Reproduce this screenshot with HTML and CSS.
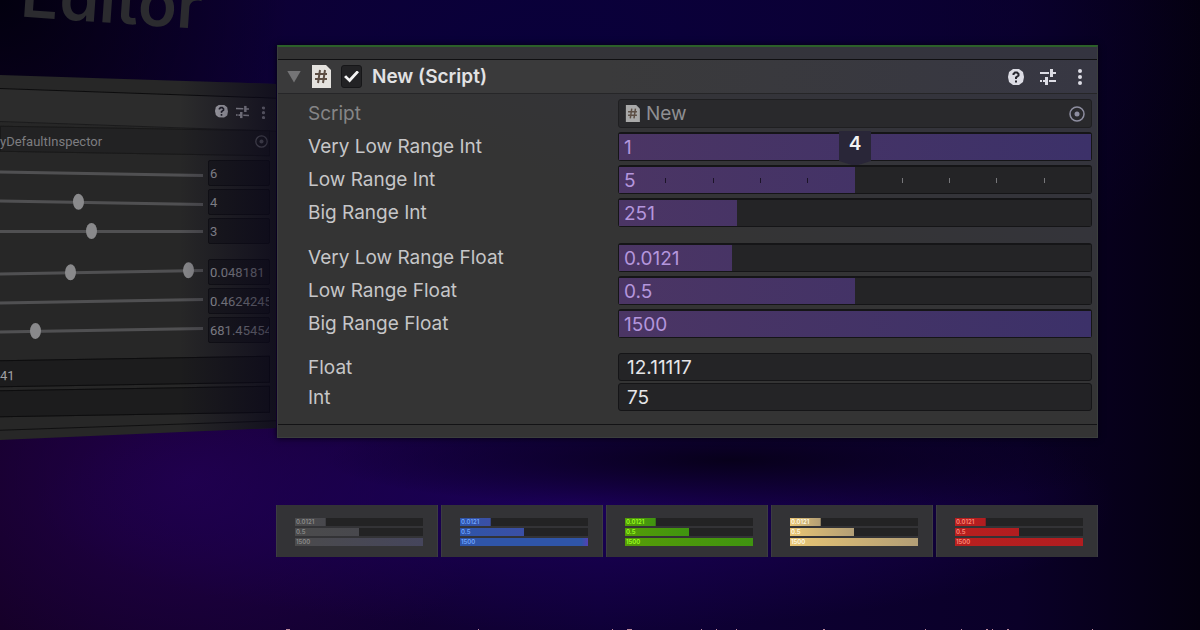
FILE: index.html
```
<!DOCTYPE html>
<html lang="en">
<head>
    <meta charset="UTF-8">
    <meta name="viewport" content="width=device-width, initial-scale=1.0">
    <title>Editor Inspector</title>
    <link rel="stylesheet" href="styles.css">
</head>
<body>
    <!-- shared icons -->
    <svg class="sprite" aria-hidden="true">
        <symbol id="help" viewBox="0 0 16 16">
            <path fill="currentColor" d="M5 0h6l4 3 1 5-1 5-4 3H5l-4-3-1-5 1-5z"/>
            <path fill="none" stroke="#26262e" stroke-width="2" d="M5.500 6V5L7 3.500h2L10.500 5v1.500L8 8.500V10"/>
            <path fill="#26262e" d="M7 11.500h2v2H7z"/>
        </symbol>
        <symbol id="preset" viewBox="0 0 16 16">
            <path fill="currentColor" d="M0 3h9v2H0zM13 3h3v2h-3zM10 0h3v8h-3zM0 11h2v2H0zM3 11h2v2H3zM9 11h7v2H9zM5 8h3v8H5z"/>
        </symbol>
        <symbol id="more" viewBox="0 0 16 16">
            <circle cx="8" cy="2" r="2" fill="currentColor"/>
            <circle cx="8" cy="8" r="2" fill="currentColor"/>
            <circle cx="8" cy="14" r="2" fill="currentColor"/>
        </symbol>
        <symbol id="target" viewBox="0 0 16 16">
            <circle cx="8" cy="8" r="7" fill="none" stroke="currentColor" stroke-width="1.500"/>
            <circle cx="8" cy="8" r="2.500" fill="currentColor"/>
        </symbol>
        <symbol id="script" viewBox="0 0 20 23">
            <path fill="currentColor" d="M1 0h14l5 5v18H1z"/>
            <path fill="none" stroke="#5d4f45" stroke-width="2" d="M9 5L7 18M14 5l-2 13M4 9h12M4 14h12"/>
        </symbol>
    </svg>

    <div id="app">
        <aside class="default-side">
            <h1>Editor</h1>
            <section class="default-panel" aria-label="Default inspector">
                <div class="default-header">
                    <button aria-label="Help"><svg><use href="#help"/></svg></button>
                    <button aria-label="Presets"><svg><use href="#preset"/></svg></button>
                    <button aria-label="More"><svg><use href="#more"/></svg></button>
                </div>
                <div class="default-script">
                    <span>yDefaultInspector</span>
                    <button aria-label="Pick script"><svg><use href="#target"/></svg></button>
                </div>
                <div class="default-rows">
                    <div class="default-row tilt-down">
                        <div class="track"><input type="range" value="0" aria-label="Very low int"></div>
                        <input type="text" value="6" aria-label="Very low int value">
                    </div>
                    <div class="default-row tilt-down">
                        <div class="track"><input type="range" value="45" aria-label="Low int"></div>
                        <input type="text" value="4" aria-label="Low int value">
                    </div>
                    <div class="default-row">
                        <div class="track"><input type="range" value="51" aria-label="Big int"></div>
                        <input type="text" value="3" aria-label="Big int value">
                    </div>
                </div>
                <div class="default-rows">
                    <div class="default-row tilt-up">
                        <div class="track">
                            <input type="range" value="41" aria-label="Very low float minimum">
                            <input type="range" value="96" aria-label="Very low float maximum">
                        </div>
                        <input type="text" value="0.048181" aria-label="Very low float value">
                    </div>
                    <div class="default-row tilt-up">
                        <div class="track"><input type="range" value="0" aria-label="Low float"></div>
                        <input type="text" value="0.4624245" aria-label="Low float value">
                    </div>
                    <div class="default-row tilt-up">
                        <div class="track"><input type="range" value="25" aria-label="Big float"></div>
                        <input type="text" value="681.45454" aria-label="Big float value">
                    </div>
                </div>
                <div class="default-strip"><span>41</span></div>
                <div class="default-strip"></div>
                <div class="default-end"></div>
            </section>
        </aside>

        <main>
            <section class="inspector">
                <div class="inspector-top"></div>
                <header>
                    <button class="foldout" aria-label="Collapse"></button>
                    <svg class="script-icon"><use href="#script"/></svg>
                    <input type="checkbox" id="enabled" checked>
                    <label for="enabled">New (Script)</label>
                    <nav>
                        <button aria-label="Help"><svg><use href="#help"/></svg></button>
                        <button aria-label="Presets"><svg><use href="#preset"/></svg></button>
                        <button aria-label="More"><svg><use href="#more"/></svg></button>
                    </nav>
                </header>

                <div class="fields">
                    <div class="row">
                        <span class="muted">Script</span>
                        <div class="object-field">
                            <svg><use href="#script"/></svg>
                            <span>New</span>
                            <button aria-label="Pick script"><svg><use href="#target"/></svg></button>
                        </div>
                    </div>
                    <div class="row">
                        <label for="vlInt">Very Low Range Int</label>
                        <div class="slider">
                            <input type="range" id="vlInt" min="0" max="1" value="1" style="--fill: 100%">
                            <output for="vlInt">1</output>
                            <span class="tooltip">4</span>
                        </div>
                    </div>
                    <div class="row">
                        <label for="lInt">Low Range Int</label>
                        <div class="slider">
                            <input type="range" id="lInt" min="0" max="10" value="5" style="--fill: 50%">
                            <output for="lInt">5</output>
                            <div class="ticks"><i></i><i></i><i></i><i></i><i></i><i></i><i></i><i></i><i></i></div>
                        </div>
                    </div>
                    <div class="row">
                        <label for="bInt">Big Range Int</label>
                        <div class="slider">
                            <input type="range" id="bInt" min="0" max="1000" value="251" style="--fill: 25%">
                            <output for="bInt">251</output>
                        </div>
                    </div>
                </div>

                <div class="fields">
                    <div class="row">
                        <label for="vlFloat">Very Low Range Float</label>
                        <div class="slider">
                            <input type="range" id="vlFloat" min="0" max="0.05" step="0.0001" value="0.0121" style="--fill: 24%">
                            <output for="vlFloat">0.0121</output>
                        </div>
                    </div>
                    <div class="row">
                        <label for="lFloat">Low Range Float</label>
                        <div class="slider">
                            <input type="range" id="lFloat" min="0" max="1" step="0.1" value="0.5" style="--fill: 50%">
                            <output for="lFloat">0.5</output>
                        </div>
                    </div>
                    <div class="row">
                        <label for="bFloat">Big Range Float</label>
                        <div class="slider">
                            <input type="range" id="bFloat" min="0" max="1500" value="1500" style="--fill: 100%">
                            <output for="bFloat">1500</output>
                        </div>
                    </div>
                </div>

                <div class="fields plain">
                    <div class="row">
                        <label for="float">Float</label>
                        <input type="text" id="float" value="12.11117">
                    </div>
                    <div class="row">
                        <label for="int">Int</label>
                        <input type="text" id="int" value="75">
                    </div>
                </div>
                <div class="inspector-end"></div>
            </section>

            <div class="themes">
                <button class="theme gray" aria-label="Gray theme">
                    <span class="bar low">0.0121</span><span class="bar half">0.5</span><span class="bar full">1500</span>
                </button>
                <button class="theme blue" aria-label="Blue theme">
                    <span class="bar low">0.0121</span><span class="bar half">0.5</span><span class="bar full">1500</span>
                </button>
                <button class="theme green" aria-label="Green theme">
                    <span class="bar low">0.0121</span><span class="bar half">0.5</span><span class="bar full">1500</span>
                </button>
                <button class="theme gold" aria-label="Gold theme">
                    <span class="bar low">0.0121</span><span class="bar half">0.5</span><span class="bar full">1500</span>
                </button>
                <button class="theme red" aria-label="Red theme">
                    <span class="bar low">0.0121</span><span class="bar half">0.5</span><span class="bar full">1500</span>
                </button>
            </div>

            <!-- glints along the lower edge -->
            <svg class="glints" viewBox="0 0 822 2" preserveAspectRatio="none" aria-hidden="true">
                <path fill="#b98a9c" d="M10 1h4v1h-4zM202 1h1v1h-1zM336 1h1v1h-1zM351 1h5v1h-5zM425 1h1v1h-1zM440 1h1v1h-1zM460 1h1v1h-1zM547 1h2v1h-2zM649 1h1v1h-1zM685 1h1v1h-1zM710 1h2v1h-2zM716 1h1v1h-1zM731 1h2v1h-2zM816 1h1v1h-1z"/>
            </svg>
        </main>
    </div>
</body>
</html>
```
FILE: styles.css
```
:root {
    --panel: #333334;
    --field: #242426;
    --line: #151517;
    --text: #c6c6c8;
    --accent-text: #b496dc;
}

* {
    box-sizing: border-box;
    margin: 0;
    padding: 0;
}

body {
    font-family: Inter, "Liberation Sans", sans-serif;
    font-size: 19px;
    color: var(--text);
    overflow: hidden;
    background:
        radial-gradient(ellipse 34% 8% at 61% 73%, rgba(6, 0, 22, 0.9), transparent),
        radial-gradient(ellipse 24% 45% at 0% 0%, rgba(0, 0, 12, 0.9), transparent),
        radial-gradient(ellipse 45% 20% at 48% 80%, #1b0058, transparent),
        radial-gradient(ellipse 26% 34% at 16% 76%, #21004a, transparent),
        radial-gradient(ellipse 58% 50% at 45% 8%, #09003a, transparent),
        linear-gradient(90deg, #150026, #0f0038 50%, #0a0028 85%, #04000f);
}

button {
    background: none;
    border: 0;
    color: inherit;
    font: inherit;
    display: flex;
    cursor: pointer;
}

input {
    font: inherit;
    color: inherit;
    min-width: 0;
}

.sprite {
    display: none;
}

#app {
    display: grid;
    grid-template-columns: 23% 1fr 102px;
    min-height: 100vh;
}

/* default inspector, turned away on the left */
.default-side {
    overflow: hidden;
}

.default-side h1 {
    height: 75px;
    padding-left: 22px;
    font-size: 64px;
    font-weight: 600;
    line-height: 24px;
    color: #2b2b2f;
    transform: rotate(4deg);
    transform-origin: 0 0;
    margin-top: -20px;
    margin-bottom: 20px;
}

.default-panel {
    position: relative;
    overflow: hidden;
    background: #272727;
    color: #a2a2a6;
    font-family: Roboto, sans-serif;
    font-size: 13px;
    clip-path: polygon(0 0, 100% 9px, 100% calc(100% - 12px), 0 100%);
}

.default-panel::after {
    content: "";
    position: absolute;
    inset: 0;
    background: linear-gradient(90deg, transparent 65%, rgba(9, 6, 26, 0.4) 85%, rgba(9, 6, 26, 0.7));
    pointer-events: none;
}

.default-header {
    display: flex;
    justify-content: flex-end;
    align-items: center;
    gap: 8px;
    height: 34px;
    margin-top: 13px;
    padding: 0 6px 4px 0;
    border-top: 1px solid #0c0c0d;
    border-bottom: 1px solid #1b1b1c;
    background: #2c2c2c;
    color: #c0c0c4;
    transform: skewY(2deg);
    transform-origin: 0 0;
}

.default-header svg,
.default-script svg {
    width: 13px;
    height: 13px;
}

.default-script {
    display: flex;
    align-items: center;
    justify-content: space-between;
    height: 26px;
    margin: 6px 0 6px;
    padding-right: 8px;
    position: relative;
    color: #7d7d80;
}

.default-script::before {
    content: "";
    position: absolute;
    inset: 0 6px 0 0;
    background: #222223;
    border: 1px solid #191919;
    transform: skewY(1deg);
}

.default-script > * {
    position: relative;
}

.default-rows {
    display: grid;
    gap: 3px;
    padding-right: 6px;
    margin-bottom: 15px;
}

.default-row {
    display: grid;
    grid-template-columns: 1fr 62px;
    gap: 5px;
    height: 26px;
}

.default-row input[type="text"] {
    background: #1b1b1d;
    border: 1px solid #111113;
    border-radius: 2px;
    padding-left: 1px;
}

.track {
    display: grid;
    align-items: center;
    margin-left: -24px;
}

.track input {
    grid-area: 1 / 1;
    appearance: none;
    width: 100%;
    height: 16px;
    background: linear-gradient(#505052, #505052) center / 100% 3px no-repeat;
}

.track input + input {
    background: none;
}

.track input::-webkit-slider-thumb {
    appearance: none;
    width: 11px;
    height: 16px;
    border-radius: 50%;
    background: #89898b;
}

.tilt-down .track {
    transform: skewY(1deg);
}

.tilt-up .track {
    transform: skewY(-1deg);
}

.default-strip {
    height: 27px;
    margin: 0 6px 3px -1px;
    padding-top: 7px;
    background: #1c1c1d;
    border: 1px solid #0d0d0e;
    transform: skewY(-1deg);
}

.default-end {
    height: 15px;
    margin-top: 10px;
    border-top: 1px solid #101011;
    transform: skewY(-2deg);
}

/* main inspector */
main {
    display: flex;
    flex-direction: column;
    padding-top: 45px;
}

.inspector {
    margin-left: 1px;
    border: 1px solid #3b3f3d;
    border-top: 2px solid #2c6129;
    background: linear-gradient(25deg, #343434 50%, #343440);
    box-shadow: 0 0 6px #05000f;
}

.inspector-top {
    height: 12px;
}

.inspector header {
    display: flex;
    align-items: center;
    height: 35px;
    padding: 0 9px;
    border-top: 1px solid #101012;
    border-bottom: 1px solid #262628;
    background: linear-gradient(90deg, #3a3a3b 40%, #373743);
}

.foldout {
    width: 14px;
    height: 12px;
    background: #747476;
    clip-path: polygon(0 0, 100% 0, 50% 100%);
}

.script-icon {
    width: 20px;
    height: 23px;
    margin: 0 10px;
    color: #e4e2de;
}

.inspector header input {
    appearance: none;
    width: 21px;
    height: 23px;
    background: #222224;
    border: 1px solid #161618;
    border-radius: 3px;
    display: grid;
    place-items: center;
}

.inspector header input:checked::before {
    content: "";
    width: 15px;
    height: 12px;
    background: #f4f4f4;
    clip-path: polygon(0 55%, 14% 40%, 36% 66%, 86% 0, 100% 14%, 38% 100%);
}

.inspector header label {
    margin-left: 10px;
    font-weight: 600;
    color: #e2e2e4;
}

.inspector nav {
    display: flex;
    gap: 16px;
    margin-left: auto;
    color: #dcdce4;
}

.inspector nav svg,
.object-field button svg {
    width: 16px;
    height: 16px;
}

.fields {
    display: grid;
    gap: 4px;
    padding: 5px 5px 0 30px;
}

.fields + .fields {
    padding-top: 16px;
}

.fields.plain {
    gap: 2px;
    padding-top: 15px;
}

.row {
    display: grid;
    grid-template-columns: 310px 1fr;
    align-items: center;
}

.muted {
    color: #858587;
}

.object-field,
.slider {
    height: 29px;
    background: var(--field);
    border: 1px solid var(--line);
    border-radius: 3px;
}

.row > input {
    width: 100%;
    height: 28px;
    padding-left: 8px;
    background: var(--field);
    border: 1px solid var(--line);
    border-radius: 3px;
    color: #e6e6e8;
}

.object-field {
    display: flex;
    align-items: center;
    gap: 6px;
    padding: 0 6px;
    background: #29292c;
    border-color: #1f1f21;
    color: #8f8f92;
}

.object-field > svg {
    width: 15px;
    height: 17px;
    color: #a9a9a9;
}

.object-field button {
    margin-left: auto;
    color: #8e8ea0;
}

.slider {
    position: relative;
    display: grid;
    align-items: center;
    border-top-width: 2px;
}

.slider input {
    grid-area: 1 / 1;
    appearance: none;
    width: 100%;
    height: 26px;
    background:
        linear-gradient(90deg, transparent var(--fill), #242426 var(--fill)),
        linear-gradient(90deg, #4b3564, #3c3169);
}

.slider input::-webkit-slider-thumb {
    appearance: none;
    width: 1px;
    height: 26px;
}

.slider output {
    grid-area: 1 / 1;
    padding-left: 5px;
    color: var(--accent-text);
    pointer-events: none;
}

.ticks {
    grid-area: 1 / 1;
    display: flex;
    justify-content: space-evenly;
    pointer-events: none;
}

.ticks i {
    width: 1px;
    height: 5px;
    background: #1c1428;
}

.ticks i:nth-child(5) {
    visibility: hidden;
}

.ticks i:nth-child(n+6) {
    background: #77777a;
}

.tooltip {
    position: absolute;
    left: 50%;
    top: -3px;
    width: 32px;
    height: 34px;
    transform: translateX(-50%);
    background: #292638;
    color: #f2f2f4;
    font-weight: 600;
    line-height: 26px;
    text-align: center;
    clip-path: polygon(0 0, 100% 0, 100% 88%, 60% 100%, 40% 100%, 0 88%);
    z-index: 1;
}

.inspector-end {
    height: 13px;
    margin-top: 13px;
    border-top: 1px solid #131315;
}

/* color themes */
.themes {
    display: grid;
    grid-template-columns: repeat(5, 1fr);
    gap: 3px;
    margin-top: 67px;
}

.theme {
    display: grid;
    gap: 2px;
    padding: 13px 14px 11px 18px;
    background: #333336;
    border: 1px solid #3c3c42;
    border-width: 0 1px;
}

.bar {
    height: 8px;
    padding-left: 1px;
    font-size: 6px;
    font-weight: 600;
    line-height: 8px;
    text-align: left;
    color: var(--ink);
    background: linear-gradient(90deg, var(--from), var(--to)) 0 0 / var(--fill) 100% no-repeat #232324;
}

.low { --fill: 24%; }
.half { --fill: 50%; }
.full { --fill: 100%; }

.gray { --from: #4b4b4c; --to: #48484d; --ink: #8a8a8a; }
.blue { --from: #2f55a8; --to: #3b4fa4; --ink: #6ea5ff; }
.green { --from: #569c08; --to: #3f9410; --ink: #9cff20; }
.gold { --from: #e8c574; --to: #b29e76; --ink: #fffbe6; }
.red { --from: #b8201f; --to: #b11d20; --ink: #ff8a78; }

.gray .full { --to: #45455c; }
.blue .full { background-image: linear-gradient(90deg, #2f55a8 95%, #5440b4); }

.glints {
    width: 100%;
    height: 2px;
    margin-top: auto;
}
```
